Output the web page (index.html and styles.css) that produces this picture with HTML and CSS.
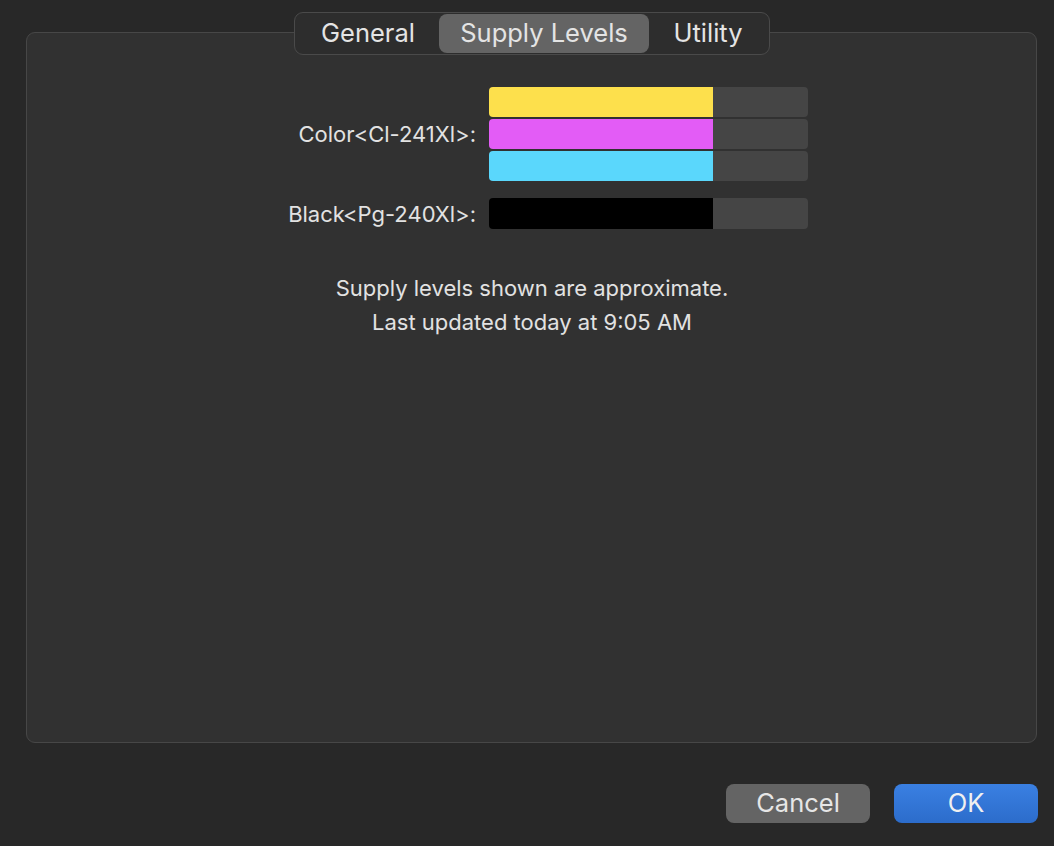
FILE: index.html
```html
<!DOCTYPE html>
<html>
<head>
<meta charset="utf-8">
<link rel="stylesheet" href="styles.css">
</head>
<body>
<div class="window">
  <div class="panel">
    <div class="tabs">
      <div class="tab">General</div>
      <div class="tab active">Supply Levels</div>
      <div class="tab">Utility</div>
    </div>
    <div class="supplies">
      <div class="label label-color">Color&lt;Cl-241Xl&gt;:</div>
      <div class="bars">
        <div class="bar"><div class="fill yellow" style="width:70.2%"></div><div class="empty"></div></div>
        <div class="bar"><div class="fill magenta" style="width:70.2%"></div><div class="empty"></div></div>
        <div class="bar"><div class="fill cyan" style="width:70.2%"></div><div class="empty"></div></div>
      </div>
      <div class="label label-black">Black&lt;Pg-240Xl&gt;:</div>
      <div class="bars">
        <div class="bar bar-black"><div class="fill black" style="width:70.2%"></div><div class="empty"></div></div>
      </div>
    </div>
    <div class="note">
      <div>Supply levels shown are approximate.</div>
      <div>Last updated today at 9:05 AM</div>
    </div>
  </div>
  <div class="buttons">
    <button class="btn cancel">Cancel</button>
    <button class="btn ok">OK</button>
  </div>
</div>
</body>
</html>
```
FILE: styles.css
```css
html, body {
  margin: 0;
  padding: 0;
  background: #282828;
  width: 1054px;
  height: 846px;
  overflow: hidden;
  font-family: Inter, "Noto Sans", "Liberation Sans", sans-serif;
  color: #dfdfdf;
}
.window {
  display: flex;
  flex-direction: column;
  width: 1054px;
  height: 846px;
}
.panel {
  margin: 32px 0 0 26px;
  width: 1011px;
  height: 711px;
  box-sizing: border-box;
  background: #313131;
  border: 1px solid #474747;
  border-radius: 9px;
  display: flex;
  flex-direction: column;
  align-items: center;
}
.tabs {
  margin-top: -21px;
  margin-left: 1px;
  height: 43px;
  box-sizing: border-box;
  background: #2d2d2d;
  border: 1px solid #4a4a4a;
  border-radius: 9px;
  display: flex;
  align-items: center;
  padding: 0 2px;
}
.tab {
  height: 39px;
  box-sizing: border-box;
  padding-bottom: 2px;
  display: flex;
  align-items: center;
  justify-content: center;
  font-size: 25.5px;
  color: #e4e4e4;
  border-radius: 8px;
}
.tab:nth-child(1) { width: 142px; }
.tab:nth-child(2) { width: 210px; }
.tab:nth-child(3) { width: 118px; }
.tab.active {
  background: #646464;
}
.supplies {
  margin-top: 32px;
  margin-left: -1px;
  display: grid;
  grid-template-columns: 222px 319px;
  column-gap: 13px;
  row-gap: 17px;
  align-items: center;
}
.label {
  text-align: right;
  font-size: 22px;
  color: #e2e2e2;
  white-space: nowrap;
}
.bars {
  display: flex;
  flex-direction: column;
  gap: 2px;
}
.bar {
  display: flex;
  height: 30px;
}
.bar-black {
  height: 31px;
}
.fill {
  height: 100%;
  border-radius: 4px 0 0 4px;
}
.empty {
  flex: 1;
  height: 100%;
  background: #454545;
  border-radius: 0 4px 4px 0;
}
.yellow { background: #fde04c; }
.magenta { background: #e35cf6; }
.cyan { background: #5ad7fc; }
.black { background: #000000; }
.note {
  margin-top: 42px;
  margin-left: 1px;
  text-align: center;
  font-size: 22px;
  line-height: 34px;
  color: #e2e2e2;
}
.buttons {
  display: flex;
  justify-content: flex-end;
  gap: 24px;
  padding: 41px 16px 0 0;
}
.btn {
  width: 144px;
  height: 39px;
  border: none;
  border-radius: 8px;
  font-family: Inter, "Noto Sans", "Liberation Sans", sans-serif;
  font-size: 25.5px;
  color: #e6e6e6;
  padding: 0 0 2px 0;
}
.cancel {
  background: #646464;
}
.ok {
  background: linear-gradient(#3a80e2, #2c6ccb);
  color: #f0f0f0;
}
```
